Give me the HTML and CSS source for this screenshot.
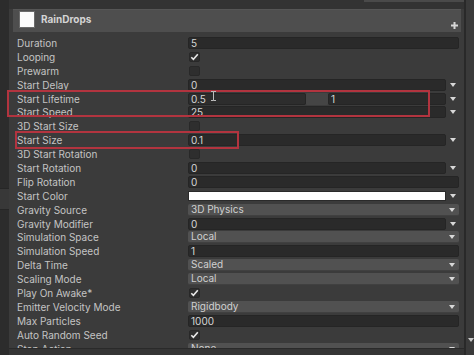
FILE: index.html
```html
<!DOCTYPE html>
<html>
<head>
<meta charset="utf-8">
<link rel="stylesheet" href="styles.css">
</head>
<body>
<div class="app">
  <div class="side"><div class="side-block"></div></div>
  <div class="main">
    <div class="topbar"><div class="topbar-tab"></div></div>
    <div class="header">
      <div class="swatch"></div>
      <div class="title">RainDrops</div>
      <svg class="plus" width="7" height="7" viewBox="0 0 7 7"><path d="M2.5 0h2v2.5H7v2H4.5V7h-2V4.5H0v-2h2.5z" fill="#d6d6d6"/></svg>
    </div>
    <div class="rows">
      <div class="row"><span class="label">Duration</span><div class="field">5</div></div>
      <div class="row"><span class="label">Looping</span><div class="check"><svg width="9" height="8" viewBox="0 0 9 8"><path d="M1.3 4.2 3.4 6.3 7.8 1.2" fill="none" stroke="#e8e8e8" stroke-width="1.6"/></svg></div></div>
      <div class="row"><span class="label">Prewarm</span><div class="check"></div></div>
      <div class="row"><span class="label">Start Delay</span><div class="curve"><div class="field">0</div><span class="arrow"></span></div></div>
      <div class="row"><span class="label">Start Lifetime</span><div class="curve"><div class="field min">0.5</div><div class="mid"></div><div class="field">1</div><span class="arrow"></span></div></div>
      <div class="row"><span class="label">Start Speed</span><div class="curve"><div class="field">25</div><span class="arrow"></span></div></div>
      <div class="row"><span class="label">3D Start Size</span><div class="check"></div></div>
      <div class="row"><span class="label">Start Size</span><div class="curve"><div class="field">0.1</div><span class="arrow"></span></div></div>
      <div class="row"><span class="label">3D Start Rotation</span><div class="check"></div></div>
      <div class="row"><span class="label">Start Rotation</span><div class="curve"><div class="field">0</div><span class="arrow"></span></div></div>
      <div class="row"><span class="label">Flip Rotation</span><div class="field">0</div></div>
      <div class="row"><span class="label">Start Color</span><div class="curve"><div class="color"></div><span class="arrow"></span></div></div>
      <div class="row"><span class="label">Gravity Source</span><div class="dropdown">3D Physics<span class="arrow in"></span></div></div>
      <div class="row"><span class="label">Gravity Modifier</span><div class="curve"><div class="field">0</div><span class="arrow"></span></div></div>
      <div class="row"><span class="label">Simulation Space</span><div class="dropdown">Local<span class="arrow in"></span></div></div>
      <div class="row"><span class="label">Simulation Speed</span><div class="field">1</div></div>
      <div class="row"><span class="label">Delta Time</span><div class="dropdown">Scaled<span class="arrow in"></span></div></div>
      <div class="row"><span class="label">Scaling Mode</span><div class="dropdown">Local<span class="arrow in"></span></div></div>
      <div class="row"><span class="label">Play On Awake*</span><div class="check"><svg width="9" height="8" viewBox="0 0 9 8"><path d="M1.3 4.2 3.4 6.3 7.8 1.2" fill="none" stroke="#e8e8e8" stroke-width="1.6"/></svg></div></div>
      <div class="row"><span class="label">Emitter Velocity Mode</span><div class="dropdown">Rigidbody<span class="arrow in"></span></div></div>
      <div class="row"><span class="label">Max Particles</span><div class="field">1000</div></div>
      <div class="row"><span class="label">Auto Random Seed</span><div class="check"><svg width="9" height="8" viewBox="0 0 9 8"><path d="M1.3 4.2 3.4 6.3 7.8 1.2" fill="none" stroke="#e8e8e8" stroke-width="1.6"/></svg></div></div>
      <div class="row"><span class="label">Stop Action</span><div class="dropdown">None<span class="arrow in"></span></div></div>
    </div>
    <div class="footer"></div>
  </div>
  <div class="scroll"><span class="scroll-arrow"></span></div>
</div>
<div class="hl hl-a"></div>
<div class="hl hl-b"></div>
<svg class="ibeam" width="7" height="10" viewBox="0 0 7 10"><path d="M1 0.5h2.5M3.5 0.5h2.5M3.5 0.5v9M1 9.5h2.5M3.5 9.5h2.5" stroke="#bdbdbd" stroke-width="1" fill="none"/></svg>
</body>
</html>
```
FILE: styles.css
```css
html, body {
  margin: 0;
  padding: 0;
}
body {
  width: 474px;
  height: 355px;
  overflow: hidden;
  background: #2b2b2b;
  font-family: Inter, "Liberation Sans", sans-serif;
  font-size: 10px;
  color: #c4c4c4;
  position: relative;
}
.app {
  display: flex;
  height: 355px;
}
.side {
  width: 9px;
  background: #2c2c2c;
  display: flex;
  flex-direction: column;
}
.side-block {
  margin-top: 188px;
  height: 20px;
  background: #383838;
  border-top: 1px solid #262626;
  border-bottom: 1px solid #262626;
}
.main {
  width: 455px;
  height: 355px;
  background: #3b3b3b;
  display: flex;
  flex-direction: column;
}
.topbar {
  height: 9px;
  flex: 0 0 9px;
  background: #333333;
  display: flex;
  justify-content: flex-end;
}
.topbar-tab {
  width: 100px;
  height: 2px;
  background: #4a4a4a;
}
.header {
  margin: 0 3px 0 4px;
  height: 23px;
  flex: 0 0 23px;
  background: #4e4e4e;
  border-top: 1px solid #565656;
  box-sizing: border-box;
  display: flex;
  align-items: flex-start;
  position: relative;
}
.swatch {
  width: 16px;
  height: 17px;
  margin: 1px 0 0 6px;
  background: #fbfbfb;
  border: 1px solid #6a6a6a;
  box-sizing: border-box;
  border-radius: 1px;
}
.title {
  margin: 3px 0 0 6px;
  font-weight: 700;
  color: #d4d4d4;
  line-height: 12px;
}
.plus {
  position: absolute;
  right: 3px;
  bottom: 3px;
}
.rows {
  flex: 1;
  min-height: 0;
  overflow: hidden;
  padding: 4px 5px 0 8px;
  display: grid;
  grid-auto-rows: 13.9px;
  align-content: start;
}
.footer {
  flex: 0 0 7px;
  background: #353535;
  border-top: 1px solid #2a2a2a;
  box-sizing: border-box;
}
.row {
  display: grid;
  grid-template-columns: 171px 1fr;
  align-items: center;
}
.label {
  white-space: nowrap;
  line-height: 12px;
}
.field {
  height: 12px;
  box-sizing: border-box;
  background: #2a2a2a;
  border: 1px solid #252525;
  border-radius: 2px;
  color: #d6d6d6;
  padding-left: 2px;
  line-height: 10px;
  flex: 1;
  min-width: 0;
}
.field.min {
  flex: 0 0 118px;
  background: #2d2d2d;
}
.mid {
  width: 22px;
  height: 12px;
  background: #454545;
  border-radius: 1px;
}
.curve {
  display: flex;
  align-items: center;
  height: 12px;
}
.arrow {
  width: 13px;
  height: 12px;
  flex: 0 0 13px;
  position: relative;
}
.arrow::after {
  content: "";
  position: absolute;
  left: 4px;
  top: 4px;
  border-left: 3.5px solid transparent;
  border-right: 3.5px solid transparent;
  border-top: 4px solid #d8d8d8;
}
.arrow.in {
  position: absolute;
  right: 0;
  top: 0;
  width: 11px;
}
.arrow.in::after {
  left: 1px;
}
.dropdown {
  position: relative;
  height: 12px;
  box-sizing: border-box;
  background: #515151;
  border-radius: 2px;
  border-bottom: 1px solid #404040;
  color: #d0d0d0;
  padding-left: 3px;
  line-height: 11px;
}
.check {
  width: 11px;
  height: 10px;
  box-sizing: border-box;
  background: #2e2e2e;
  border: 1px solid #282828;
  border-radius: 2px;
  display: flex;
  align-items: center;
  justify-content: center;
  margin-left: 1px;
}
.check svg {
  display: block;
}
.color {
  flex: 1;
  height: 10px;
  background: #ffffff;
  border: 1px solid #2a2a2a;
  box-sizing: border-box;
}
.scroll {
  width: 10px;
  background: #3a3a3a;
  border-left: 2px solid #292929;
  box-sizing: border-box;
  position: relative;
}
.scroll-arrow {
  position: absolute;
  left: 2px;
  top: 338px;
  border-left: 3.5px solid transparent;
  border-right: 3.5px solid transparent;
  border-top: 4px solid #c8c8c8;
}
.hl {
  position: absolute;
  border: 2px solid #b2343f;
  box-sizing: border-box;
}
.hl-a {
  left: 7px;
  top: 90px;
  width: 423px;
  height: 27px;
}
.hl-b {
  left: 15px;
  top: 131px;
  width: 224px;
  height: 18px;
}
.ibeam {
  position: absolute;
  left: 210px;
  top: 91px;
}
```
